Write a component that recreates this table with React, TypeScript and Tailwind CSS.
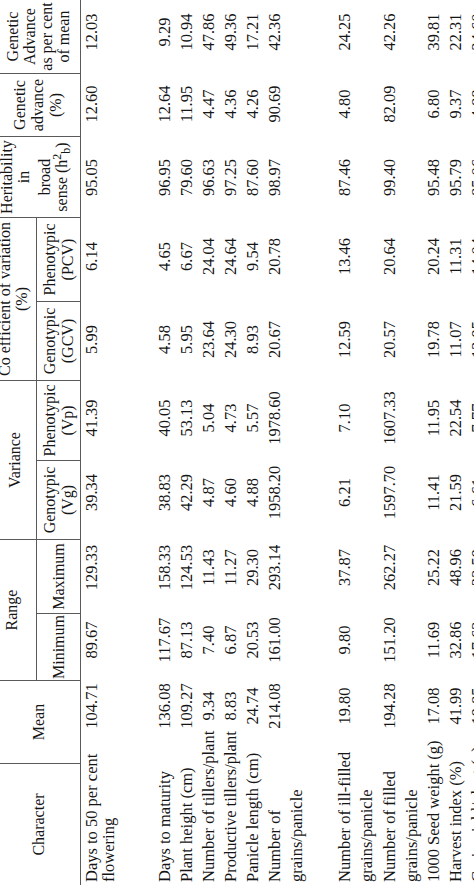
const rows: { label: string[]; h: string; values: string[] }[] = [
  {
    label: ["Days to 50 per cent", "flowering"],
    h: "h-[73px] leading-[17px] pt-[2px]",
    values: ["104.71", "89.67", "129.33", "39.34", "41.39", "5.99", "6.14", "95.05", "12.60", "12.03"],
  },
  {
    label: ["Days to maturity"],
    h: "h-[22px]",
    values: ["136.08", "117.67", "158.33", "38.83", "40.05", "4.58", "4.65", "96.95", "12.64", "9.29"],
  },
  {
    label: ["Plant height (cm)"],
    h: "h-[22px]",
    values: ["109.27", "87.13", "124.53", "42.29", "53.13", "5.95", "6.67", "79.60", "11.95", "10.94"],
  },
  {
    label: ["Number of tillers/plant"],
    h: "h-[22px]",
    values: ["9.34", "7.40", "11.43", "4.87", "5.04", "23.64", "24.04", "96.63", "4.47", "47.86"],
  },
  {
    label: ["Productive tillers/plant"],
    h: "h-[22px]",
    values: ["8.83", "6.87", "11.27", "4.60", "4.73", "24.30", "24.64", "97.25", "4.36", "49.36"],
  },
  {
    label: ["Panicle length (cm)"],
    h: "h-[22px]",
    values: ["24.74", "20.53", "29.30", "4.88", "5.57", "8.93", "9.54", "87.60", "4.26", "17.21"],
  },
  {
    label: ["Number of", "grains/panicle"],
    h: "h-[70px]",
    values: ["214.08", "161.00", "293.14", "1958.20", "1978.60", "20.67", "20.78", "98.97", "90.69", "42.36"],
  },
  {
    label: ["Number of ill-filled", "grains/panicle"],
    h: "h-[45px]",
    values: ["19.80", "9.80", "37.87", "6.21", "7.10", "12.59", "13.46", "87.46", "4.80", "24.25"],
  },
  {
    label: ["Number of filled", "grains/panicle"],
    h: "h-[44px]",
    values: ["194.28", "151.20", "262.27", "1597.70", "1607.33", "20.57", "20.64", "99.40", "82.09", "42.26"],
  },
  {
    label: ["1000 Seed weight (g)"],
    h: "h-[22px]",
    values: ["17.08", "11.69", "25.22", "11.41", "11.95", "19.78", "20.24", "95.48", "6.80", "39.81"],
  },
  {
    label: ["Harvest index (%)"],
    h: "h-[22px]",
    values: ["41.99", "32.86", "48.96", "21.59", "22.54", "11.07", "11.31", "95.79", "9.37", "22.31"],
  },
  {
    label: ["Grain yield/plant (g)"],
    h: "h-[22px]",
    values: ["19.85", "17.63", "23.59", "6.61", "7.77", "12.95", "14.04", "85.06", "4.88", "24.60"],
  },
];

const line = "border-[#5a5a5a]";

function Header() {
  return (
    <div
      className={`-mt-[12px] grid grid-cols-[122px_83px_67px_74px_79px_80px_79px_84px_81px_63px_73px] grid-rows-[49px_43px] border-b ${line} leading-[18px]`}
    >
      <div className={`row-span-2 flex items-center justify-center border-r ${line} pt-[10px]`}>Character</div>
      <div className={`row-span-2 flex items-center justify-center border-r ${line} pt-[10px]`}>Mean</div>
      <div className={`col-span-2 flex items-center justify-center border-r border-b ${line}`}>Range</div>
      <div className={`col-span-2 flex items-center justify-center border-r border-b ${line} pt-[6px]`}>Variance</div>
      <div
        className={`col-span-2 flex flex-col items-center justify-center border-r border-b ${line} pt-[2px] leading-[17px]`}
      >
        <span>Co efficient of variation</span>
        <span>(%)</span>
      </div>
      <div className={`row-span-2 flex flex-col items-center justify-center border-r ${line} leading-[17px]`}>
        <span>Heritability</span>
        <span>in</span>
        <span className="mt-[4px]">broad</span>
        <span>
          sense (h<sup>2</sup>
          <sub>b</sub>)
        </span>
      </div>
      <div className={`row-span-2 flex flex-col items-center justify-center border-r ${line} pt-[8px]`}>
        <span>Genetic</span>
        <span>advance</span>
        <span>(%)</span>
      </div>
      <div className={`row-span-2 flex flex-col items-center justify-center ${line} pt-[8px] leading-[17px]`}>
        <span>Genetic</span>
        <span>Advance</span>
        <span className="whitespace-nowrap">as per cent</span>
        <span>of mean</span>
      </div>
      <div className={`flex flex-col items-center justify-center border-r ${line}`}>
        <span>Minimum</span>
      </div>
      <div className={`flex flex-col items-center justify-center border-r ${line}`}>
        <span>Maximum</span>
      </div>
      <div className={`flex flex-col items-center justify-center border-r ${line}`}>
        <span>Genotypic</span>
        <span>(Vg)</span>
      </div>
      <div className={`flex flex-col items-center justify-center border-r ${line}`}>
        <span>Phenotypic</span>
        <span>(Vp)</span>
      </div>
      <div className={`flex flex-col items-center justify-center border-r ${line}`}>
        <span>Genotypic</span>
        <span>(GCV)</span>
      </div>
      <div className={`flex flex-col items-center justify-center border-r ${line}`}>
        <span>Phenotypic</span>
        <span>(PCV)</span>
      </div>
    </div>
  );
}

function DataRows() {
  return (
    <div className="text-[16.5px] leading-[22px]">
      {rows.map((r) => (
        <div
          key={r.label.join(" ")}
          className={`grid grid-cols-[148px_62px_70px_75px_75px_74px_83px_83px_75px_72px_72px] items-start ${r.h}`}
        >
          <div className="whitespace-nowrap pl-[3px]">
            {r.label.map((l) => (
              <div key={l}>{l}</div>
            ))}
          </div>
          {r.values.map((v, i) => (
            <div key={i} className="whitespace-nowrap text-center">
              {v}
            </div>
          ))}
        </div>
      ))}
    </div>
  );
}

export default function App() {
  return (
    <div className="h-[885px] w-[474px] overflow-hidden bg-white">
      <div
        className="h-[474px] w-[885px] origin-top-left translate-y-[885px] -rotate-90 overflow-hidden text-[16px] text-[#151515]"
        style={{ fontFamily: '"Liberation Serif", "Times New Roman", serif' }}
      >
        <Header />
        <DataRows />
      </div>
    </div>
  );
}
